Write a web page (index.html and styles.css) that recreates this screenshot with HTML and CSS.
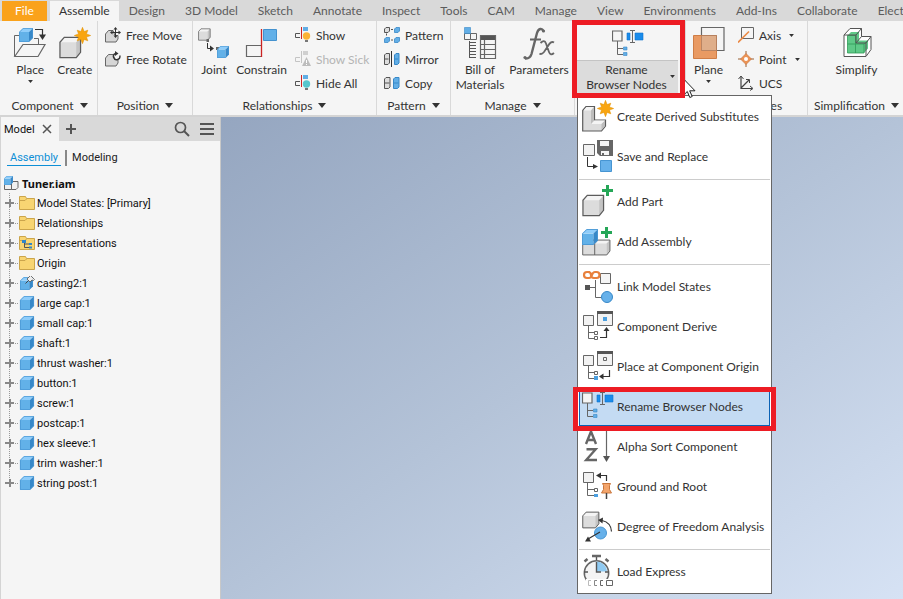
FILE: index.html
```html
<!DOCTYPE html>
<html lang="en">
<head>
    <meta charset="UTF-8">
    <meta name="viewport" content="width=device-width, initial-scale=1.0">
    <title>Tuner.iam</title>
    <link rel="stylesheet" href="styles.css">
</head>
<body>
    <!-- shared icon shapes -->
    <svg class="sprite" aria-hidden="true">
        <symbol id="star" viewBox="-8 -8 16 16">
            <path fill="#f9a50f" stroke="#e08f00" stroke-width=".5" d="M0-7.7 1.5-3.7 5-5 3.7-1.5 7.7 0 3.7 1.5 5 5 1.5 3.7 0 7.7-1.5 3.7-5 5-3.7 1.5-7.7 0-3.7-1.5-5-5-1.5-3.7Z"/>
        </symbol>
        <symbol id="cube-grey" viewBox="0 0 24 24">
            <path fill="#dcdcdc" d="M1 6.500 5.500 1.500h17V17L18 22.500H1Z"/>
            <path fill="#f4f4f4" d="M1 6.500 5.500 1.500h17L18 6.500Z"/>
            <path fill="#c4c4c4" d="M22.500 1.500V17L18 22.500V6.500Z"/>
            <path fill="none" stroke="#5c5c5c" stroke-width="1.300" d="M1 6.500 5.500 1.500h17V17L18 22.500H1Z"/>
        </symbol>
        <symbol id="cube-blue" viewBox="0 0 14 14">
            <path fill="#62b1e8" d="M0 4h10v10H0Z"/>
            <path fill="#8fcdfa" d="M0 4 4 0h10l-4 4Z"/>
            <path fill="#3788c8" d="M14 0v10l-4 4V4Z"/>
            <path fill="none" stroke="#4a97d3" stroke-width=".8" d="M.4 4.200 4.200.4h9.400v9.400l-3.800 3.800H.4Z"/>
        </symbol>
        <symbol id="folder" viewBox="0 0 16 14">
            <path fill="#f8d572" stroke="#cba54b" d="M.5.500h6l1 2h8v11H.5Z"/>
            <path fill="none" stroke="#cba54b" d="M1 4.500h5l2-2"/>
        </symbol>
        <symbol id="rename" viewBox="0 0 32 32">
            <path fill="#f5f5f5" stroke="#666" stroke-width="1.200" d="M.5 2H10v10H.5Z"/>
            <path fill="none" stroke="#666" d="M5.500 12v13.500H11M5.500 19.500H11"/>
            <path fill="#62aee6" stroke="#3788c8" stroke-width=".6" d="M11.500 18H15v3h-3.500ZM11.500 23.500H15v3h-3.500Z"/>
            <path fill="#1a8ceb" stroke="#0f74cc" stroke-width=".6" d="M15 4h3v7h-3ZM23 4h8v7h-8Z"/>
            <path fill="none" stroke="#666" d="M18 1.500h5M20.500 1.500v12M18 13.500h5"/>
        </symbol>
        <symbol id="arrow" viewBox="0 0 8 5">
            <path fill="currentColor" d="M0 0h8L4 5Z"/>
        </symbol>
    </svg>

    <nav class="tabs">
        <a class="tab tab-file" href="#">File</a>
        <a class="tab tab-active" href="#">Assemble</a>
        <a class="tab" href="#">Design</a>
        <a class="tab" href="#">3D Model</a>
        <a class="tab" href="#">Sketch</a>
        <a class="tab" href="#">Annotate</a>
        <a class="tab" href="#">Inspect</a>
        <a class="tab" href="#">Tools</a>
        <a class="tab" href="#">CAM</a>
        <a class="tab" href="#">Manage</a>
        <a class="tab" href="#">View</a>
        <a class="tab" href="#">Environments</a>
        <a class="tab" href="#">Add-Ins</a>
        <a class="tab" href="#">Collaborate</a>
        <a class="tab" href="#">Elect</a>
    </nav>

    <header class="ribbon">
        <section class="group group-component">
            <div class="tools">
                <button class="tool">
                    <svg class="icon-lg" viewBox="0 0 32 32">
                        <path fill="none" stroke="#666" d="M5 7.500H.5V28M20 10.500h4.500V16"/>
                        <path fill="#f5f5f5" stroke="#666" stroke-width="1.200" d="M.7 28.500 9 16.500h22L24 28.500Z"/>
                        <use href="#cube-blue" x="5" y="0" width="14" height="14"/>
                        <path fill="none" stroke="#333" stroke-width="1.200" d="M21 1.500h7.500V7"/>
                        <path fill="#333" d="M25 6.500h7L28.500 12Z"/>
                    </svg>
                    <span>Place</span>
                    <svg class="caret"><use href="#arrow"/></svg>
                </button>
                <button class="tool">
                    <svg class="icon-lg" viewBox="0 0 32 32">
                        <use href="#cube-grey" x="0" y="8" width="23" height="23"/>
                        <use href="#star" x="15" y="-1" width="17" height="17"/>
                    </svg>
                    <span>Create</span>
                </button>
            </div>
            <h2>Component <svg class="arrow"><use href="#arrow"/></svg></h2>
        </section>

        <section class="group group-position">
            <div class="tools">
                <div class="tool-list">
                    <button>
                        <svg class="icon" viewBox="0 0 16 16">
                            <path fill="#d6d6d6" stroke="#666" d="M.5 7 3.500 3.500H8l2 5h3V12l-2 3H.5Z"/>
                            <path fill="none" stroke="#333" d="M10.500 1v9M6 5.500h9"/>
                            <path fill="#333" d="m8.500 2.500 2-2.500 2 2.500ZM8.500 8.500l2 2.500 2-2.500ZM7.500 3.500 5 5.500l2.500 2ZM13.500 3.500l2.500 2-2.500 2Z"/>
                        </svg>
                        Free Move
                    </button>
                    <button>
                        <svg class="icon" viewBox="0 0 16 16">
                            <path fill="#d6d6d6" stroke="#666" d="M.5 7 3.500 3.500H8l2 5h3V12l-2 3H.5Z"/>
                            <path fill="none" stroke="#333" stroke-width="1.400" d="M10.500 2.500a3.200 3.200 0 1 0 4.200 2"/>
                            <path fill="#333" d="M10 0v5l3.500-2.500Z"/>
                        </svg>
                        Free Rotate
                    </button>
                </div>
            </div>
            <h2>Position <svg class="arrow"><use href="#arrow"/></svg></h2>
        </section>

        <section class="group group-relationships">
            <div class="tools">
                <button class="tool">
                    <svg class="icon-lg" viewBox="0 0 32 32">
                        <use href="#cube-grey" x="0" y="0" width="13" height="13"/>
                        <path fill="#666" d="M8.500 11H11v3H8.500ZM18 19h3v3h-3Z"/>
                        <path fill="none" stroke="#333" d="M9.500 15v5.500H13"/>
                        <path fill="#333" d="m12 17.500 4 3-4 3Z"/>
                        <use href="#cube-blue" x="19" y="18" width="12" height="12"/>
                    </svg>
                    <span>Joint</span>
                </button>
                <button class="tool tool-constrain">
                    <svg class="icon-lg" viewBox="0 0 32 32">
                        <path fill="#62b0e8" stroke="#4492cf" d="M17.500 1.500h13v11h-13Z"/>
                        <path fill="none" stroke="#666" stroke-width="1.200" d="M15 17.500H.5v11H15"/>
                        <path stroke="#c22" stroke-width="1.300" d="M15.500 1v28"/>
                    </svg>
                    <span>Constrain</span>
                </button>
                <div class="tool-list">
                    <button>
                        <svg class="icon" viewBox="0 0 16 16">
                            <path fill="none" stroke="#555" d="M5 6.500H.5v4H5"/>
                            <path fill="#62aee6" d="M8 0h5v4H8Z"/>
                            <path stroke="#c22" d="M6.500 0v12"/>
                            <circle cx="11.500" cy="9" r="3.700" fill="#fbb336"/>
                            <path fill="#777" d="M10 13h3v2h-3Z"/>
                        </svg>
                        Show
                    </button>
                    <button class="is-disabled" disabled>
                        <svg class="icon" viewBox="0 0 16 16">
                            <path fill="none" stroke="#c4c4c4" d="M5 6.500H.5v4H5M6.500 0v12"/>
                            <path fill="#d0d0d0" d="M8 0h5v4H8Z"/>
                            <path fill="#bdbdbd" d="m11.500 6 4.500 9H7Z"/>
                            <path stroke="#fff" d="M11.500 9v3m0 1v1"/>
                        </svg>
                        Show Sick
                    </button>
                    <button>
                        <svg class="icon" viewBox="0 0 16 16">
                            <path fill="none" stroke="#555" d="M5 6.500H.5v4H5"/>
                            <path fill="#62aee6" d="M8 0h5v4H8Z"/>
                            <path stroke="#c22" d="M6.500 0v12"/>
                            <circle cx="11.500" cy="9" r="3.700" fill="#58c6cd"/>
                            <path fill="#777" d="M10 13h3v2h-3Z"/>
                        </svg>
                        Hide All
                    </button>
                </div>
            </div>
            <h2>Relationships <svg class="arrow"><use href="#arrow"/></svg></h2>
        </section>

        <section class="group group-pattern">
            <div class="tools">
                <div class="tool-list">
                    <button>
                        <svg class="icon" viewBox="0 0 16 16">
                            <path fill="#ddd" stroke="#555" d="M.5 2 2 .5h3.500V4L4 5.500H.5Z"/>
                            <path fill="#62aee6" stroke="#3788c8" stroke-width=".8" d="M10.500 2 12 .5h3.500V4L14 5.500h-3.500ZM.5 12 2 10.500h3.500V14L4 15.500H.5ZM10.500 12l1.500-1.500h3.500V14L14 15.500h-3.500Z"/>
                            <path stroke="#555" stroke-dasharray="2 1" d="M7 2.500h3M2.500 6.500v3M7 13h3"/>
                        </svg>
                        Pattern
                    </button>
                    <button>
                        <svg class="icon" viewBox="0 0 16 16">
                            <path fill="#ddd" stroke="#555" d="M.5 4 2 2.500h3.500V12L4 13.500H.5ZM.5 8h4"/>
                            <path fill="#62aee6" stroke="#3788c8" d="m10.500 4 1.500-1.500h3V12l-1.500 1.500h-3ZM10.500 8H14"/>
                            <path stroke="#333" d="M7.500 0v16"/>
                        </svg>
                        Mirror
                    </button>
                    <button>
                        <svg class="icon" viewBox="0 0 16 16">
                            <path fill="#ddd" stroke="#555" d="m.5 4 1.500-1.500h4V12l-1.500 1.500h-4ZM.5 8h5"/>
                            <path fill="#62aee6" stroke="#3788c8" d="m9.500 4 1.500-1.500h4V12l-1.500 1.500h-4ZM9.500 8h5"/>
                        </svg>
                        Copy
                    </button>
                </div>
            </div>
            <h2>Pattern <svg class="arrow"><use href="#arrow"/></svg></h2>
        </section>

        <section class="group group-manage">
            <div class="tools">
                <button class="tool tool-bom">
                    <svg class="icon-lg" viewBox="0 0 32 32">
                        <path fill="none" stroke="#666" d="M.5 5.500h6v6h-6ZM6.500 5.500h6v6h-6Z"/>
                        <path fill="#62aee6" stroke="#3788c8" stroke-width=".6" d="M.5-.5h6v6h-6Z"/>
                        <path fill="#555" d="M16 7h16v5H16Z"/>
                        <path fill="none" stroke="#666" stroke-width="1.200" d="M16.500 7.500h15v23h-15ZM20.500 12v18M16 16.500h15M16 21.500h15M16 26.500h15"/>
                        <path fill="none" stroke="#555" d="M5.500 13v17M6 14.500h6M6 17.500h6M6 20.500h6M6 23.500h6M6 26.500h6M6 29.500h6"/>
                    </svg>
                    <span>Bill of Materials</span>
                </button>
                <button class="tool tool-parameters">
                    <svg class="icon-lg" viewBox="0 0 32 32">
                        <path fill="none" stroke="#666" stroke-width="2.400" d="M20.500 3C19 0 15.500 0 14 5L8.500 26Q7 31 2 30.500"/>
                        <path fill="none" stroke="#666" stroke-width="1.800" d="M7 11.500h11M17.500 15q4-4 5.500.5l3 8.500q1.500 4 5 1M31 14.500q-3-2-6 3.500l-4 6q-2.500 3-4.500 1.500"/>
                        <circle cx="20.500" cy="3" r="1.600" fill="#666"/>
                        <circle cx="2" cy="29.500" r="1.600" fill="#666"/>
                    </svg>
                    <span>Parameters</span>
                </button>
            </div>
            <h2>Manage <svg class="arrow"><use href="#arrow"/></svg></h2>
        </section>

        <section class="group group-productivity">
            <div class="split">
                <button class="split-main" aria-label="Rename Browser Nodes">
                    <svg class="icon-lg"><use href="#rename"/></svg>
                </button>
                <button class="split-menu" aria-haspopup="true" aria-expanded="true">
                    <span>Rename<br>Browser Nodes</span>
                    <svg class="caret"><use href="#arrow"/></svg>
                </button>
            </div>

            <ul class="menu">
                <li><button>
                    <svg class="icon-lg" viewBox="0 0 32 32">
                        <path fill="#dcdcdc" stroke="#5c5c5c" stroke-width="1.200" d="M.7 10.500 4 6.500h8.500V20h11v6l-4 5H.7Z"/>
                        <path fill="#f4f4f4" d="m1.500 10.500 3-3.500H12l-3 3.500ZM9 24l3.500-3.500H23L19.500 24Z"/>
                        <path fill="#bdbdbd" d="M9 10.500 12 7v13.500L9 24ZM19.500 24l3.500-3.500V26l-3.500 4Z"/>
                        <use href="#star" x="15" y="0" width="17" height="17"/>
                    </svg>
                    Create Derived Substitutes</button></li>
                <li><button>
                    <svg class="icon-lg" viewBox="0 0 32 32">
                        <path fill="#f2f2f2" stroke="#666" d="M1.500 4.500h11v11h-11Z"/>
                        <path fill="#666" d="M15 0h16v16H18l-3-3Z"/>
                        <path fill="#f5f5f5" d="M18 1h9v5h-9ZM19 11h8v4h-8Z"/>
                        <path fill="#666" d="M20 13h2v2h-2Z"/>
                        <path fill="none" stroke="#333" d="M5.500 17v9.500H12"/>
                        <path fill="#333" d="m11 24 5 2.500-5 2.500Z"/>
                        <path fill="#67b1ea" stroke="#4795d2" d="M18.500 20.500h11v11h-11Z"/>
                    </svg>
                    Save and Replace</button></li>
                <li class="divided"><button>
                    <svg class="icon-lg" viewBox="0 0 32 32">
                        <use href="#cube-grey" x="0" y="9" width="23" height="23"/>
                        <path fill="#25a657" d="M24 0h3v4h4v3h-4v4h-3V7h-4V4h4Z"/>
                    </svg>
                    Add Part</button></li>
                <li><button>
                    <svg class="icon-lg" viewBox="0 0 32 32">
                        <use href="#cube-grey" x="0" y="14" width="17" height="17"/>
                        <use href="#cube-grey" x="12" y="14" width="17" height="17"/>
                        <use href="#cube-blue" x="0" y="4" width="16" height="16"/>
                        <path fill="#25a657" d="M23 2h3v4h4v3h-4v4h-3V9h-4V6h4Z"/>
                    </svg>
                    Add Assembly</button></li>
                <li class="divided"><button>
                    <svg class="icon-lg" viewBox="0 0 32 32">
                        <path fill="#f5f5f5" stroke="#666" d="M18.500 3.500h10v10h-10Z"/>
                        <path fill="none" stroke="#e8803c" stroke-width="2.200" d="M8 2H5a3 3 0 0 0 0 6h2c4 0 2-6 6-6h1.500a3 3 0 0 1 0 6H12c-2 0-3-1-3-3s-1-3-3-3"/>
                        <path fill="#555" d="M3 15h5v5H3Z"/>
                        <path fill="none" stroke="#666" d="M8 17.500h5.500M13.500 10v17.500H19"/>
                        <circle cx="25" cy="27" r="5.500" fill="#67b1ea" stroke="#3788c8"/>
                    </svg>
                    Link Model States</button></li>
                <li><button>
                    <svg class="icon-lg" viewBox="0 0 32 32">
                        <path fill="#f2f2f2" stroke="#666" d="M1.500 5.500h10v10h-10ZM15.500 1.500h15v14h-15Z"/>
                        <path fill="#555" d="M15 1h16v3H15Z"/>
                        <path fill="#4b9fdf" d="M21 7h4v4h-4Z"/>
                        <path fill="none" stroke="#666" d="M6.500 16v12.500H12M6.500 22.500H12M12.500 21.500h3v3h-3ZM12.500 26.500h3v3h-3Z"/>
                        <path fill="none" stroke="#333" stroke-width="1.200" d="M18 27.500h6.500V20"/>
                        <path fill="#333" d="M21.500 21 24.500 17l3 4Z"/>
                    </svg>
                    Component Derive</button></li>
                <li><button>
                    <svg class="icon-lg" viewBox="0 0 32 32">
                        <path fill="#f2f2f2" stroke="#666" d="M1.500 5.500h10v10h-10ZM15.500 1.500h15v14h-15Z"/>
                        <path fill="#555" d="M15 1h16v3H15Z"/>
                        <path fill="none" stroke="#666" d="M21.500 7.500h3v3h-3ZM6.500 16v12.500H12M6.500 22.500H12M12.500 21.500h3v3h-3Z"/>
                        <path fill="#4b9fdf" d="M12 26h4v4h-4Z"/>
                        <path fill="none" stroke="#333" stroke-width="1.200" d="M21 26.500h6.500V20"/>
                        <path fill="#333" d="m21.500 23.500-4.500 3 4.500 3Z"/>
                    </svg>
                    Place at Component Origin</button></li>
                <li class="marked"><button class="is-selected">
                    <svg class="icon-lg"><use href="#rename"/></svg>
                    Rename Browser Nodes</button></li>
                <li><button>
                    <svg class="icon-lg" viewBox="0 0 32 32">
                        <path fill="none" stroke="#666" stroke-width="2.400" d="m4 14 5-12.500L14 14M5.500 10h7M4.500 19.200h9.200L4.200 30H15"/>
                        <path stroke="#666" stroke-width="1.200" d="M24.500 1v26"/>
                        <path fill="#555" d="M21 26h7l-3.500 6Z"/>
                    </svg>
                    Alpha Sort Component</button></li>
                <li><button>
                    <svg class="icon-lg" viewBox="0 0 32 32">
                        <path fill="#f2f2f2" stroke="#666" d="M1.500 2.500h10v10h-10Z"/>
                        <path fill="none" stroke="#666" d="M5.500 13v12.500H12M5.500 19.500H12M12.500 18.500h3v3h-3Z"/>
                        <path fill="#4b9fdf" d="M12 24h4v3h-4Z"/>
                        <path fill="none" stroke="#333" stroke-width="1.200" d="M18 5.500h6.500V11"/>
                        <path fill="#333" d="M19 2.500 14 5.500l5 3Z"/>
                        <path fill="#f3a56c" stroke="#c9763c" d="M20.500 13.500h8l-1 2v4l2 3.500h-10l2-3.500v-4Z"/>
                        <path stroke="#444" stroke-width="1.500" d="M24.500 23v6"/>
                    </svg>
                    Ground and Root</button></li>
                <li><button>
                    <svg class="icon-lg" viewBox="0 0 32 32">
                        <use href="#cube-grey" x="0" y="1" width="18" height="18"/>
                        <circle cx="18.500" cy="23" r="6" fill="#67b1ea" stroke="#4795d2"/>
                        <path fill="none" stroke="#333" stroke-width="1.200" d="m18 22-12 7M20 10.500q9 2 9.500 11"/>
                        <path fill="#333" d="m6 26.500-3 5h6ZM21 7.500l-5 2.500 4.500 3.500Z"/>
                    </svg>
                    Degree of Freedom Analysis</button></li>
                <li class="divided"><button>
                    <svg class="icon-lg" viewBox="0 0 32 32">
                        <path fill="#f4f4f4" stroke="#666" stroke-width="1.500" d="M4.500 25a12.200 12.200 0 1 1 20 0Z"/>
                        <path fill="#8fcaf2" d="M14.500 6.500a10.500 10.500 0 0 1 10.500 10H14.500Z"/>
                        <path fill="none" stroke="#555" stroke-width="1.400" d="M14.500 7v10H19M2 17h4M23 17h4M14.500 1v4"/>
                        <path fill="none" stroke="#666" stroke-width="2.500" d="M10 1h9M2.500 6.500 5.500 4M23.500 4l3 2.500"/>
                        <path fill="#fff" d="M4 24h28v8H4Z"/>
                        <path fill="none" stroke="#bbb" d="M9 25.500H6.500v5H9"/>
                        <path fill="none" stroke="#888" d="M15 25.500h-2.500v5H15"/>
                        <path fill="none" stroke="#666" d="M21 25.500h-2.500v5H21M24.500 25.500h6v5h-6Z"/>
                    </svg>
                    Load Express</button></li>
            </ul>

            <svg class="pointer" viewBox="0 0 13 21">
                <path fill="#fff" stroke="#222" d="M.7 1v16l3.600-3.500 2.500 6 2.400-1-2.500-5.700H12Z"/>
            </svg>
        </section>

        <section class="group group-work">
            <div class="tools">
                <button class="tool">
                    <svg class="icon-lg" viewBox="0 0 32 32">
                        <path fill="none" stroke="#666" stroke-width="1.200" d="M8.500-.5h22.500v23H8.500Z"/>
                        <path fill="#e99a63" stroke="#cf7d46" d="M.5 7.500h23v23H.5Z"/>
                        <path fill="#dfae8a" stroke="#a8775a" stroke-width=".7" d="M8.500 7.500h15v15h-15Z"/>
                    </svg>
                    <span>Plane</span>
                    <svg class="caret"><use href="#arrow"/></svg>
                </button>
                <div class="tool-list">
                    <button>
                        <svg class="icon" viewBox="0 0 16 16">
                            <path fill="none" stroke="#666" d="M3.500.500h12v11h-12Z"/>
                            <path stroke="#ec8a45" stroke-width="1.600" d="m0 15.500 11-11"/>
                        </svg>
                        Axis
                        <svg class="caret"><use href="#arrow"/></svg>
                    </button>
                    <button>
                        <svg class="icon" viewBox="0 0 16 16">
                            <path stroke="#9a6035" d="M8 0v16M0 8h16"/>
                            <path fill="#eb9355" stroke="#c9703a" stroke-width=".6" d="m8 2.500 5.500 5.500L8 13.500 2.500 8Z"/>
                            <circle cx="8" cy="8" r="2" fill="#fff"/>
                        </svg>
                        Point
                        <svg class="caret"><use href="#arrow"/></svg>
                    </button>
                    <button>
                        <svg class="icon" viewBox="0 0 16 16">
                            <path fill="none" stroke="#444" stroke-width="1.200" d="M3 2v11.500h11M3 13l8-8"/>
                            <path fill="none" stroke="#444" d="M.5 4 3 1l2.500 3M12 11l3 2.500-3 2M8 4.500h3.500V8"/>
                        </svg>
                        UCS
                    </button>
                </div>
            </div>
            <h2>Work Features</h2>
        </section>

        <section class="group group-simplification">
            <div class="tools">
                <button class="tool tool-simplify">
                    <svg class="icon-lg" viewBox="0 0 32 32">
                        <path fill="#fff" d="m3 7 6-6.500h11.500v8h9.500v13L25 28.500H3Z"/>
                        <path fill="#5fc987" d="M6.500 7.500 10 4h8v8.500h9v8l-4 4.500H6.500Z"/>
                        <path fill="none" stroke="#2f9a57" stroke-width=".8" d="M6.500 7.500v17.500H23v-9h-8.500V7.500ZM6.500 16h8v9M23 16l4-3.500M14.500 7.500 18 4"/>
                        <path fill="none" stroke="#555" d="m3 7 6-6.500h11.500v8h9.500v13L25 28.500H3ZM3 7h12v8h10v13M15 7l5.500-6.500M25 15l5-6.500M15 15l5.500-6.500"/>
                    </svg>
                    <span>Simplify</span>
                </button>
            </div>
            <h2>Simplification <svg class="arrow"><use href="#arrow"/></svg></h2>
        </section>
    </header>

    <main class="workspace">
        <aside class="browser">
            <div class="browser-bar">
                <div class="browser-tab">
                    Model
                    <button aria-label="Close">
                        <svg width="10" height="10" viewBox="0 0 10 10"><path stroke="#555" stroke-width="1.500" d="m1 1 8 8M9 1 1 9"/></svg>
                    </button>
                </div>
                <button aria-label="Add">
                    <svg width="10" height="10" viewBox="0 0 10 10"><path stroke="#555" stroke-width="2" d="M5 0v10M0 5h10"/></svg>
                </button>
                <button class="search" aria-label="Search">
                    <svg width="16" height="16" viewBox="0 0 16 16"><circle cx="6.500" cy="6.500" r="5" fill="none" stroke="#555" stroke-width="1.700"/><path stroke="#555" stroke-width="2" d="m10 10 5 5"/></svg>
                </button>
                <button aria-label="Menu">
                    <svg width="14" height="12" viewBox="0 0 14 12"><path stroke="#555" stroke-width="2" d="M0 1h14M0 6h14M0 11h14"/></svg>
                </button>
            </div>

            <div class="modes">
                <a class="mode mode-active" href="#">Assembly</a>
                <a class="mode" href="#">Modeling</a>
            </div>

            <div class="root">
                <svg width="15" height="14" viewBox="0 0 15 14">
                    <path fill="#f0f0f0" stroke="#666" d="M.5 8.500h7v5h-7ZM7.500 7l1.500-1.500h5v6l-2 2H7.500Z"/>
                    <use href="#cube-blue" x="0" y="0" width="9" height="9"/>
                </svg>
                Tuner.iam
            </div>
            <ul class="tree">
                <li><svg class="node-icon"><use href="#folder"/></svg>Model States: [Primary]</li>
                <li><svg class="node-icon"><use href="#folder"/></svg>Relationships</li>
                <li>
                    <svg class="node-icon" viewBox="0 0 16 14">
                        <use href="#folder" width="16" height="14"/>
                        <path fill="none" stroke="#555" d="M5.500 6v5.500H10M5.500 8H10"/>
                        <path fill="#2f86cc" d="M3 4h4v3H3ZM10 7h3v2h-3ZM10 10.500h3v2h-3Z"/>
                    </svg>Representations
                </li>
                <li><svg class="node-icon"><use href="#folder"/></svg>Origin</li>
                <li>
                    <svg class="node-icon" viewBox="0 0 16 14">
                        <use href="#cube-blue" x="1" y="1" width="13" height="13"/>
                        <path fill="#eee" stroke="#555" stroke-width=".8" d="m11.500-.5 4 4-1 1-1.500-.5-2 2L8 3l2-2Z"/>
                        <path stroke="#444" d="m9.500 4.500-3 3"/>
                    </svg>casting2:1
                </li>
                <li><svg class="node-icon"><use href="#cube-blue"/></svg>large cap:1</li>
                <li><svg class="node-icon"><use href="#cube-blue"/></svg>small cap:1</li>
                <li><svg class="node-icon"><use href="#cube-blue"/></svg>shaft:1</li>
                <li><svg class="node-icon"><use href="#cube-blue"/></svg>thrust washer:1</li>
                <li><svg class="node-icon"><use href="#cube-blue"/></svg>button:1</li>
                <li><svg class="node-icon"><use href="#cube-blue"/></svg>screw:1</li>
                <li><svg class="node-icon"><use href="#cube-blue"/></svg>postcap:1</li>
                <li><svg class="node-icon"><use href="#cube-blue"/></svg>hex sleeve:1</li>
                <li><svg class="node-icon"><use href="#cube-blue"/></svg>trim washer:1</li>
                <li><svg class="node-icon"><use href="#cube-blue"/></svg>string post:1</li>
            </ul>
        </aside>
        <div class="canvas"></div>
    </main>
</body>
</html>
```
FILE: styles.css
```css
*,
*::after {
    box-sizing: border-box;
}

body {
    margin: 0;
    min-height: 100vh;
    display: flex;
    flex-direction: column;
    font-family: Lato, "Open Sans", sans-serif;
    font-size: 12px;
    line-height: 15px;
    color: #333;
    background-color: #d9d9d9;
    overflow: hidden;
}

button {
    margin: 0;
    padding: 0;
    border: 0;
    background: none;
    font: inherit;
    color: inherit;
}

ul {
    margin: 0;
    padding: 0;
    list-style: none;
}

svg {
    display: block;
    flex: none;
}

.sprite {
    position: absolute;
    width: 0;
    height: 0;
}

/* Ribbon tabs */
.tabs {
    display: flex;
    height: 21px;
    padding-left: 2px;
    overflow: hidden;
}

.tab {
    flex: none;
    padding: 3px 10px;
    color: #5c5c5c;
    text-decoration: none;
    white-space: nowrap;
}

.tab-file {
    width: 45px;
    margin: 1px 3px 0 0;
    padding: 2px 0;
    text-align: center;
    color: #fff;
    background-color: #faa21b;
}

.tab-active {
    margin-top: 1px;
    padding: 2px 9px;
    color: #333;
    background-color: #f5f5f5;
}

/* Ribbon groups */
.ribbon {
    display: flex;
    height: 96px;
    padding-left: 2px;
    border-bottom: 2px solid #d4d4d4;
    background-color: #f5f5f5;
}

.group {
    display: flex;
    flex-direction: column;
    flex: none;
    border-right: 1px solid #d9d9d9;
}

.group-component { width: 96px; }
.group-position { width: 95px; }
.group-relationships { width: 184px; }
.group-pattern { width: 74px; }
.group-manage { width: 124px; }
.group-productivity { width: 111px; position: relative; }
.group-work { width: 122px; }
.group-simplification { flex: 1 0 95px; border-right: 0; }

.group h2 {
    display: flex;
    justify-content: center;
    align-items: center;
    gap: 6px;
    margin: 0;
    font-size: 12px;
    font-weight: normal;
    white-space: nowrap;
}

.group-work h2 {
    padding-right: 6px;
}

.tools {
    display: flex;
    height: 77px;
}

.tool {
    display: flex;
    flex-direction: column;
    align-items: center;
    width: 45px;
    padding-top: 7px;
}

.tool span {
    margin-top: 2px;
}

.tool .caret {
    margin-top: 3px;
}

.group-component .tools {
    padding-left: 6px;
}

.group-relationships .tool { width: 42px; }
.group-relationships .tool-constrain { width: 53px; }
.group-manage .tool-bom { width: 58px; }
.group-manage .tool-parameters { width: 60px; }
.group-simplification .tool-simplify { width: 97px; }

.tool-list {
    padding: 2px 0 0 7px;
}

.tool-list button {
    display: flex;
    align-items: center;
    gap: 5px;
    height: 24px;
    white-space: nowrap;
}

.tool-list .caret {
    margin-left: 3px;
}

.tool-list .is-disabled {
    color: #b4b4b4;
}

.icon-lg {
    width: 32px;
    height: 32px;
    overflow: visible;
}

.icon {
    width: 16px;
    height: 16px;
}

.arrow {
    width: 8px;
    height: 5px;
}

.caret {
    width: 5px;
    height: 3px;
}

/* Open split button */
.split {
    display: flex;
    flex-direction: column;
    width: 101px;
    height: 73px;
    margin-left: 2px;
    padding-top: 4px;
}

.split-main {
    display: flex;
    justify-content: center;
    height: 36px;
    padding-top: 4px;
    border-bottom: 1px solid #c4c4c4;
}

.split-menu {
    display: flex;
    align-items: center;
    justify-content: center;
    gap: 3px;
    height: 33px;
    padding: 0 0 2px 6px;
    background-color: #dcdcdc;
}

.group-productivity::after,
.marked::after {
    content: "";
    position: absolute;
    border: 5px solid #ed1c24;
    pointer-events: none;
}

.group-productivity::after {
    top: -1px;
    left: -3px;
    width: 113px;
    height: 78px;
    z-index: 4;
}

.pointer {
    position: absolute;
    top: 57px;
    left: 108px;
    width: 13px;
    height: 21px;
    z-index: 3;
}

.menu {
    position: absolute;
    top: 74px;
    left: 2px;
    width: 195px;
    padding: 1px;
    border: 1px solid #666;
    background-color: #fff;
    z-index: 2;
}

.menu button {
    display: flex;
    align-items: center;
    gap: 3px;
    width: 100%;
    height: 40px;
    padding: 0 0 2px 3px;
    white-space: nowrap;
}

.divided {
    margin-top: 2px;
    padding-top: 2px;
    border-top: 1px solid #ccc;
}

.marked {
    position: relative;
    height: 40px;
    padding-top: 4px;
}

.marked::after {
    top: 0;
    left: -6px;
    width: 203px;
    height: 44px;
}

.menu .is-selected {
    height: 35px;
    padding-bottom: 4px;
    border: 1px solid #0a62b5;
    padding-left: 2px;
    background-color: #c4dbf3;
}

/* Model browser */
.workspace {
    display: flex;
    flex: 1;
}

.browser {
    flex: none;
    width: 221px;
    border-left: 1px solid #d4d4d4;
    border-right: 1px solid #c8c8c8;
    background-color: #f5f5f5;
    font-family: Roboto, "Noto Sans", sans-serif;
    font-size: 11px;
    color: #111;
}

.browser-bar {
    display: flex;
    align-items: center;
    gap: 10px;
    height: 24px;
    padding-right: 6px;
    background-color: #d9d9d9;
}

.browser-tab {
    display: flex;
    align-items: center;
    justify-content: space-between;
    width: 58px;
    height: 24px;
    padding: 0 7px 0 3px;
    margin-right: -3px;
    background-color: #f5f5f5;
}

.search {
    margin-left: auto;
}

.modes {
    display: flex;
    align-items: center;
    padding: 9px 6px 7px;
}

.mode {
    padding: 0 3px 1px;
    color: #222;
    text-decoration: none;
}

.mode-active {
    margin-right: 4px;
    padding: 0 3px;
    color: #0d8fd6;
    border-bottom: 1px solid #0d8fd6;
}

.mode + .mode {
    padding-left: 5px;
    border-left: 2px solid #888;
}

.root {
    display: flex;
    align-items: center;
    gap: 3px;
    height: 20px;
    padding-left: 3px;
    font-family: "Noto Sans", sans-serif;
    font-weight: bold;
}

.tree li {
    display: flex;
    align-items: center;
    gap: 2px;
    height: 20px;
    /* plus sign, dotted branch and dotted trunk */
    background:
        linear-gradient(#888, #888) 4px 9px / 9px 2px no-repeat,
        linear-gradient(#888, #888) 8px 6px / 2px 8px no-repeat,
        repeating-linear-gradient(90deg, #999 0 1px, transparent 1px 2px) 14px 10px / 3px 1px no-repeat,
        repeating-linear-gradient(#999 0 1px, transparent 1px 2px) 8px 0 / 1px 100% no-repeat;
    padding-left: 18px;
}

.tree li:last-child {
    background-size: 9px 2px, 2px 8px, 3px 1px, 1px 10px;
}

.node-icon {
    width: 16px;
    height: 14px;
}

.canvas {
    flex: 1;
    background: linear-gradient(145deg, #95a6c0, #b4c3d8 50%, #d6e2f4);
}
```
